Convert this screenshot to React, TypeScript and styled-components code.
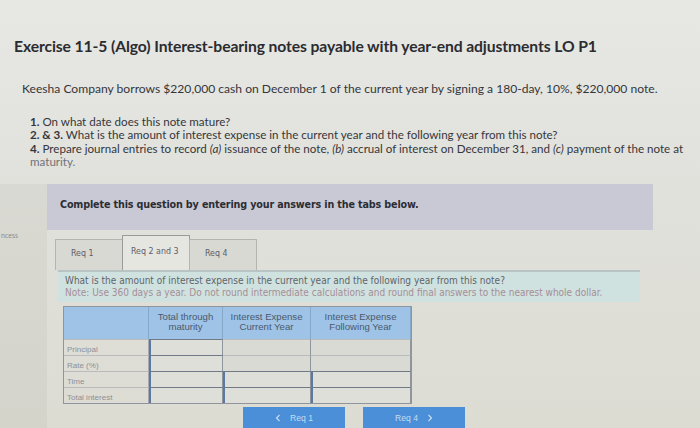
import styled, { createGlobalStyle } from "styled-components";

const GlobalStyle = createGlobalStyle`
  html, body {
    margin: 0;
    padding: 0;
  }
  body {
    width: 700px;
    height: 428px;
    overflow: hidden;
    background: linear-gradient(180deg, #e7e7e4 0%, #e1e1dc 45%, #dcdcd3 100%);
    font-family: "Lato", "Liberation Sans", sans-serif;
    color: #2f3033;
  }
`;

const rows = ["Principal", "Rate (%)", "Time", "Total interest"];

const App = () => {
    return (
        <Page>
            <GlobalStyle />
            <Title>Exercise 11-5 (Algo) Interest-bearing notes payable with year-end adjustments LO P1</Title>
            <Intro>
                Keesha Company borrows $220,000 cash on December 1 of the current year by signing a 180-day, 10%, $220,000 note.
            </Intro>
            <List>
                <li><b>1.</b> On what date does this note mature?</li>
                <li><b>2. &amp; 3.</b> What is the amount of interest expense in the current year and the following year from this note?</li>
                <li>
                    <b>4.</b> Prepare journal entries to record <i>(a)</i> issuance of the note, <i>(b)</i> accrual of interest on December 31, and <i>(c)</i> payment of the note at <Faded>maturity.</Faded>
                </li>
            </List>

            <Body>
                <Gutter>
                    <GutterText>ncess</GutterText>
                </Gutter>
                <Main>
                    <Banner>Complete this question by entering your answers in the tabs below.</Banner>

                    <TabBar>
                        <Tab>Req 1</Tab>
                        <Tab active>Req 2 and 3</Tab>
                        <Tab>Req 4</Tab>
                    </TabBar>

                    <Prompt>
                        <PromptLine>What is the amount of interest expense in the current year and the following year from this note?</PromptLine>
                        <NoteLine>Note: Use 360 days a year. Do not round intermediate calculations and round final answers to the nearest whole dollar.</NoteLine>
                    </Prompt>

                    <Table>
                        <HeadCell />
                        <HeadCell>Total through<br />maturity</HeadCell>
                        <HeadCell>Interest Expense<br />Current Year</HeadCell>
                        <HeadCell>Interest Expense<br />Following Year</HeadCell>
                        {rows.map((label, r) => (
                            <Row key={label}>
                                <LabelCell>{label}</LabelCell>
                                <InputCell editable />
                                <InputCell editable={r >= 2} />
                                <InputCell editable={r >= 2} />
                            </Row>
                        ))}
                    </Table>

                    <NavRow>
                        <NavButton>
                            <Chevron viewBox="0 0 8 10"><path d="M6 1 L2 5 L6 9" /></Chevron>
                            Req 1
                        </NavButton>
                        <NavButton>
                            Req 4
                            <Chevron viewBox="0 0 8 10"><path d="M2 1 L6 5 L2 9" /></Chevron>
                        </NavButton>
                    </NavRow>
                </Main>
            </Body>
        </Page>
    );
};

const Page = styled.div`
  padding-top: 36px;
  display: flex;
  flex-direction: column;
`;

const Title = styled.h1`
  margin: 0 0 0 14px;
  font-family: "Lato", sans-serif;
  font-weight: 700;
  font-size: 15.7px;
  line-height: 20px;
  color: #2b2c30;
  letter-spacing: -0.1px;
`;

const Intro = styled.p`
  margin: 26px 0 0 22px;
  font-size: 12.1px;
  line-height: 14px;
  color: #34363a;
`;

const List = styled.ul`
  margin: 19px 0 0 30px;
  padding: 0;
  list-style: none;
  font-size: 11.6px;
  line-height: 13.4px;
  color: #35373b;
  width: 670px;

  b {
    font-weight: 700;
  }
`;

const Faded = styled.span`
  display: block;
  color: #707278;
`;

const Body = styled.div`
  margin-top: 15px;
  display: grid;
  grid-template-columns: 47px 1fr;
`;

const Gutter = styled.div`
  background: rgba(150, 150, 140, 0.1);
  padding-top: 38px;
`;

const GutterText = styled.span`
  font-size: 7px;
  color: #8a8c90;
  margin-left: 1px;
`;

const Main = styled.div`
  display: flex;
  flex-direction: column;
`;

const Banner = styled.div`
  width: 606px;
  height: 46px;
  box-sizing: border-box;
  padding: 14px 0 0 13px;
  background: #c8c9d5;
  font-family: "DejaVu Sans Condensed", "DejaVu Sans", sans-serif;
  font-weight: 700;
  font-size: 10.7px;
  color: #2c2d33;
  letter-spacing: -0.15px;
`;

const TabBar = styled.div`
  display: flex;
  align-items: flex-end;
  margin: 7px 0 0 8px;
  height: 33px;
`;

const Tab = styled.div<{ active?: boolean }>`
  width: 68px;
  height: ${(p) => (p.active ? "35px" : "31px")};
  box-sizing: border-box;
  padding: ${(p) => (p.active ? "10px" : "8px")} 0 0 ${(p) => (p.active ? "8px" : "15px")};
  background: ${(p) => (p.active ? "#e6e6e1" : "#d9d9d3")};
  border: 1px solid ${(p) => (p.active ? "#9a9a98" : "#b4b4b0")};
  border-bottom: none;
  margin-right: -1px;
  font-family: "DejaVu Sans Condensed", "DejaVu Sans", sans-serif;
  font-size: 8.8px;
  color: #5e6068;
`;

const Prompt = styled.div`
  width: 582px;
  margin-left: 11px;
  box-sizing: border-box;
  padding: 3px 0 3px 7px;
  background: #cfe2e0;
  border-top: 2px solid #b8c4c4;
  font-family: "DejaVu Sans Condensed", "DejaVu Sans", sans-serif;
  font-size: 10px;
  line-height: 12px;
  white-space: nowrap;
`;

const PromptLine = styled.div`
  color: #5f646a;
`;

const NoteLine = styled.div`
  color: #a78d96;
`;

const Table = styled.div`
  margin: 4px 0 0 16px;
  width: 347px;
  display: grid;
  grid-template-columns: 85px 74px 88px 100px;
  border: 1px solid #8e959c;
`;

const HeadCell = styled.div`
  height: 32px;
  box-sizing: border-box;
  padding-top: 5px;
  background: #9ec3e6;
  border-right: 1px solid #86a8c8;
  text-align: center;
  font-family: "Liberation Sans", sans-serif;
  font-size: 9.6px;
  line-height: 10px;
  color: #4b5a6e;
`;

const Row = styled.div`
  display: contents;
`;

const LabelCell = styled.div`
  height: 16px;
  box-sizing: border-box;
  padding: 5px 0 0 3px;
  border-top: 1px solid #b9bbbd;
  border-right: 1px solid #a6a9ad;
  font-family: "Liberation Sans", sans-serif;
  font-size: 8px;
  line-height: 10px;
  color: #8d9096;
`;

const InputCell = styled.div<{ editable?: boolean }>`
  height: 16px;
  box-sizing: border-box;
  background: ${(p) => (p.editable ? "#dedfd9" : "#d9dad3")};
  border-top: 1px solid ${(p) => (p.editable ? "#6f7a86" : "#b9bbbd")};
  border-right: 1px solid #8e959c;
  border-left: ${(p) => (p.editable ? "2px solid #5a78a0" : "none")};
`;

const NavRow = styled.div`
  display: flex;
  gap: 18px;
  margin: 3px 0 0 196px;
`;

const NavButton = styled.div`
  width: 102px;
  height: 22px;
  display: flex;
  align-items: center;
  justify-content: center;
  gap: 9px;
  background: #4a8fd8;
  font-family: "Liberation Sans", sans-serif;
  font-size: 8.6px;
  color: #c6dcf2;
`;

const Chevron = styled.svg`
  width: 6px;
  height: 8px;
  fill: none;
  stroke: #c6dcf2;
  stroke-width: 1.6;
`;

export default App;
